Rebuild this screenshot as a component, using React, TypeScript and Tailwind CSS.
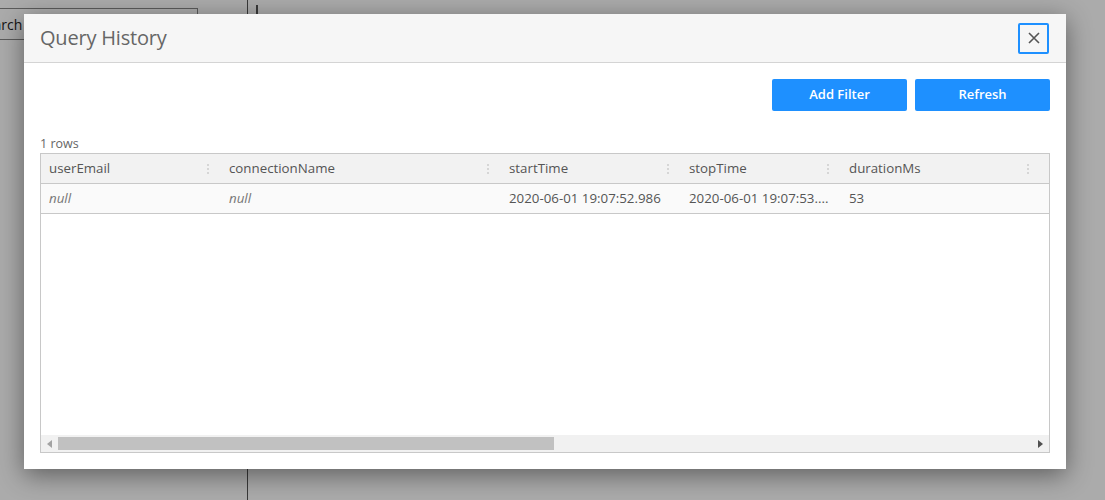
import React from "react";

const cols = [
  { name: "userEmail", w: 180, v: "null", italic: true },
  { name: "connectionName", w: 280, v: "null", italic: true },
  { name: "startTime", w: 180, v: "2020-06-01 19:07:52.986" },
  { name: "stopTime", w: 160, v: "2020-06-01 19:07:53...." },
  { name: "durationMs", w: 200, v: "53" },
];

function Dots() {
  return (
    <span className="flex flex-col gap-[2px] mr-[12px]">
      <span className="w-[2px] h-[2px] bg-[#d6d6d6]" />
      <span className="w-[2px] h-[2px] bg-[#d6d6d6]" />
      <span className="w-[2px] h-[2px] bg-[#d6d6d6]" />
    </span>
  );
}

export default function App() {
  return (
    <div
      className="relative w-[1105px] h-[500px] overflow-hidden bg-white"
      style={{ fontFamily: '"Open Sans", "Noto Sans", sans-serif' }}
    >
      {/* underlying page */}
      <div className="flex h-full">
        <div className="w-[248px] h-full border-r border-[#555] pt-[8px]">
          <div className="-ml-[40px] w-[238px] h-[32px] border border-[#888] flex items-center pl-[17px] text-[14px] text-[#222]">
            Search
          </div>
        </div>
        <div className="pl-[8px] pt-[5px]">
          <div className="w-[2px] h-[10px] bg-[#555]" />
        </div>
      </div>
      {/* backdrop */}
      <div className="absolute inset-0 bg-[rgba(0,0,0,0.33)]" />
      {/* modal */}
      <div className="absolute left-[24px] top-[14px] w-[1042px] h-[455px] bg-white shadow-[0_6px_24px_rgba(0,0,0,0.45)] flex flex-col">
        <div className="h-[49px] bg-[#f6f6f6] border-b border-[#d4d4d4] flex items-center justify-between pl-[16px] pr-[17px]">
          <div className="text-[20px] text-[#666] tracking-[-0.2px]">Query History</div>
          <button className="w-[31px] h-[31px] border-2 border-[#1e90ff] rounded-[2px] flex items-center justify-center bg-[#f6f6f6]">
            <svg width="12" height="12" viewBox="0 0 12 12">
              <path d="M1 1L11 11M11 1L1 11" stroke="#555" strokeWidth="1.6" />
            </svg>
          </button>
        </div>
        <div className="flex-1 flex flex-col px-[16px] pt-[16px] pb-[16px]">
          <div className="flex justify-end gap-[8px]">
            <button className="w-[135px] h-[32px] bg-[#1e90ff] text-white text-[13px] font-semibold rounded-[2px]">
              Add Filter
            </button>
            <button className="w-[135px] h-[32px] bg-[#1e90ff] text-white text-[13px] font-semibold rounded-[2px]">
              Refresh
            </button>
          </div>
          <div className="mt-[24px] text-[12.5px] leading-[18px] text-[#666]">1 rows</div>
          <div className="flex-1 border border-[#c8c8c8] flex flex-col overflow-hidden">
            <div className="flex-1 overflow-hidden">
              <div className="flex h-[30px] bg-[#f2f2f2] border-b border-[#c8c8c8]">
                {cols.map((c) => (
                  <div
                    key={c.name}
                    style={{ width: c.w }}
                    className="flex items-center justify-between pl-[8px] text-[13.3px] text-[#555]"
                  >
                    <span>{c.name}</span>
                    <Dots />
                  </div>
                ))}
              </div>
              <div className="flex h-[30px] bg-[#fafafa] border-b border-[#c8c8c8]">
                {cols.map((c) => (
                  <div
                    key={c.name}
                    style={{ width: c.w }}
                    className={`flex items-center pl-[8px] pr-[8px] text-[13.3px] whitespace-nowrap overflow-hidden ${c.italic ? "italic text-[#777]" : "text-[#555]"}`}
                  >
                    {c.v}
                  </div>
                ))}
              </div>
            </div>
            <div className="h-[17px] bg-[#f1f1f1] flex items-center">
              <div className="w-[17px] h-full flex items-center justify-center">
                <svg width="5" height="8" viewBox="0 0 5 8">
                  <path d="M5 0L0 4L5 8Z" fill="#a3a3a3" />
                </svg>
              </div>
              <div className="w-[496px] h-[13px] bg-[#c1c1c1]" />
              <div className="flex-1" />
              <div className="w-[17px] h-full flex items-center justify-center">
                <svg width="5" height="8" viewBox="0 0 5 8">
                  <path d="M0 0L5 4L0 8Z" fill="#505050" />
                </svg>
              </div>
            </div>
          </div>
        </div>
      </div>
    </div>
  );
}
